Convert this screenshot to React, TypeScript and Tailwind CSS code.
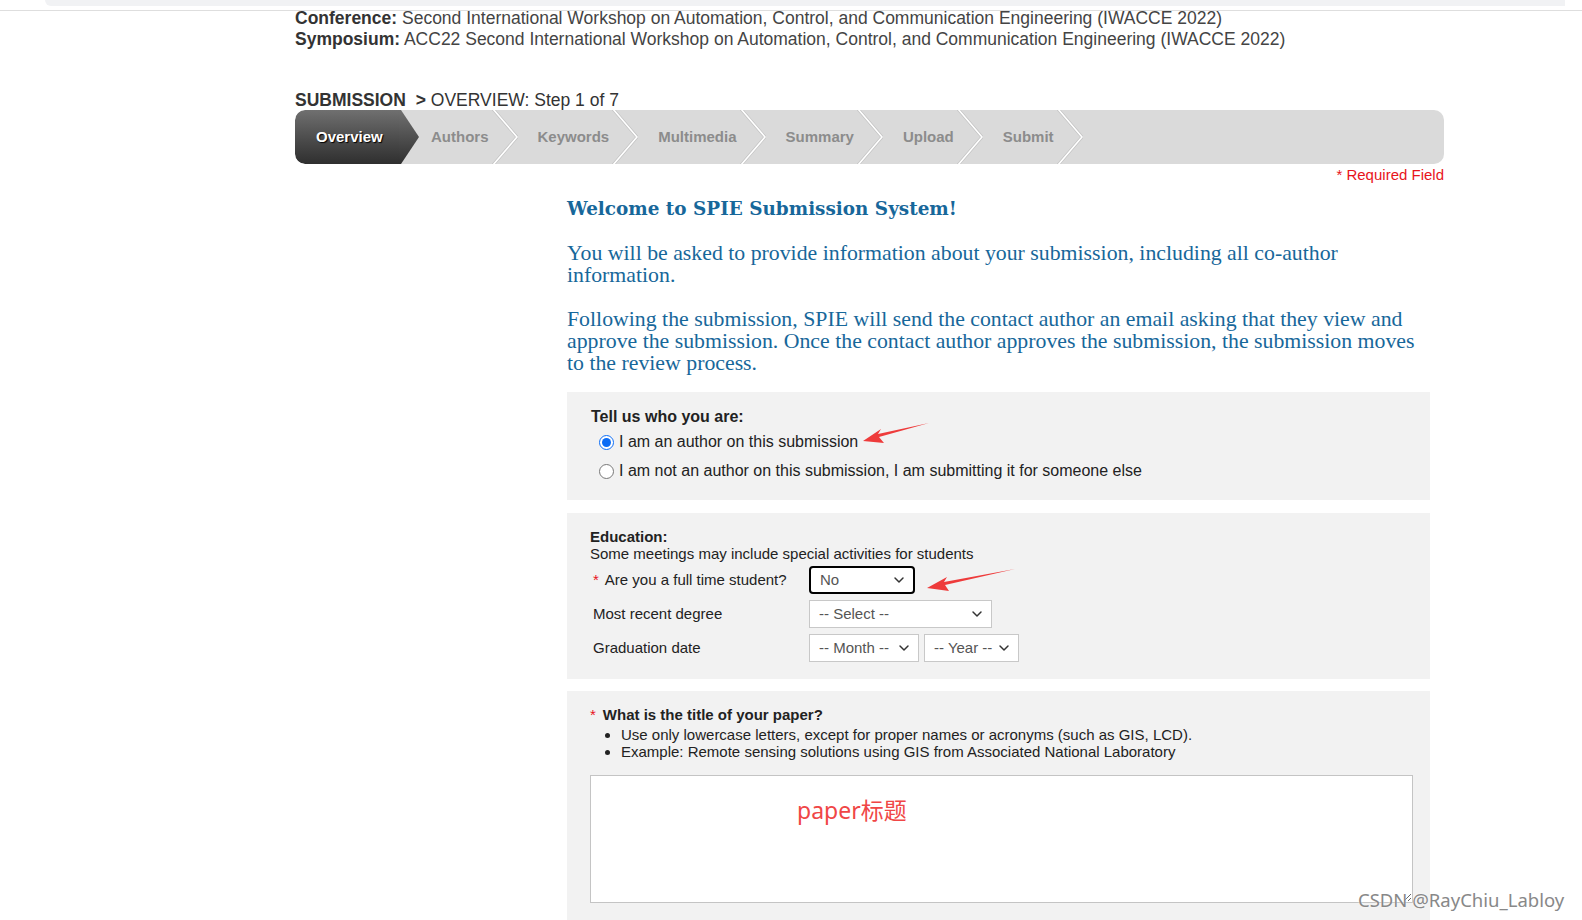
import { ChevronDown } from "lucide-react";

const steps = ["Authors", "Keywords", "Multimedia", "Summary", "Upload", "Submit"];

function Chevron() {
  return (
    <svg width="26" height="54" viewBox="0 0 26 54" className="shrink-0">
      <polyline points="1,-1 25,27 1,55" fill="none" stroke="#c4c4c4" strokeWidth="3" />
      <polyline points="1,-1 25,27 1,55" fill="none" stroke="#ffffff" strokeWidth="1.6" />
    </svg>
  );
}

function FakeSelect({ label, width, focused }: { label: string; width: string; focused?: boolean }) {
  return (
    <div
      className={
        "flex items-center justify-between bg-white text-[15px] text-[#555] pl-[9px] pr-[6px] h-[28px] " +
        width +
        (focused ? " border-2 border-black rounded-[4px]" : " border border-[#c8c8c8]")
      }
    >
      <span>{label}</span>
      <ChevronDown size={16} strokeWidth={2.2} className="text-[#333]" />
    </div>
  );
}

export default function App() {
  return (
    <div className="relative w-[1582px] h-[920px] overflow-hidden bg-white font-['Liberation_Sans',Arial,sans-serif] text-[#333]">
      {/* top leftover header */}
      <div className="h-[11px] border-b border-[#dedede]">
        <div className="ml-[45px] mr-[17px] h-[6px] bg-[#f1f2f4] rounded-bl-[14px]" />
      </div>

      <div className="ml-[295px] w-[1149px]">
        <div className="-mt-[3px] text-[17.5px] leading-[21px] text-[#444]">
          <div>
            <b className="text-[#333]">Conference:</b> Second International Workshop on Automation, Control, and
            Communication Engineering (IWACCE 2022)
          </div>
          <div>
            <b className="text-[#333]">Symposium:</b> ACC22 Second International Workshop on Automation, Control, and
            Communication Engineering (IWACCE 2022)
          </div>
        </div>

        <div className="mt-[40px] text-[17.5px] leading-[20px] text-[#333]">
          <b>SUBMISSION</b> <span className="font-bold ml-[5px]">&gt;</span> OVERVIEW: Step 1 of 7
        </div>

        {/* step bar */}
        <div className="h-[54px] flex bg-[#dadada] rounded-[10px] overflow-hidden text-[15px] font-bold text-[#8c8c8c]">
          <div className="flex items-center w-[104px] pl-[21px] bg-gradient-to-b from-[#707070] to-[#2f2f2f] text-white [text-shadow:1px_1px_1px_#000] rounded-l-[10px]">
            Overview
          </div>
          <svg width="20" height="54" viewBox="0 0 20 54" className="shrink-0">
            <defs>
              <linearGradient id="dk" x1="0" y1="0" x2="0" y2="1">
                <stop offset="0" stopColor="#707070" />
                <stop offset="1" stopColor="#2f2f2f" />
              </linearGradient>
            </defs>
            <polygon points="0,0 2,0 20,27 2,54 0,54" fill="url(#dk)" />
          </svg>
          {steps.map((s, i) => (
            <div key={s} className="flex items-center">
              <span className={(i === 0 ? "pl-[12px]" : "pl-[20px]") + " pr-[3px]"}>{s}</span>
              <Chevron />
            </div>
          ))}
        </div>

        <div className="mt-[2px] text-right text-[15px] leading-[18px] text-[#e8141b]">* Required Field</div>

        {/* main column */}
        <div className="ml-[272px] w-[863px] mt-[13px]">
          <div className="text-[#17679a]">
            <h1 className="font-['DejaVu_Serif',Georgia,serif] text-[18.4px] font-bold leading-[24px]">
              Welcome to SPIE Submission System!
            </h1>
            <div className="font-['Liberation_Serif',Georgia,serif] text-[21.8px] leading-[22px] whitespace-nowrap">
              <p className="mt-[21px]">
                You will be asked to provide information about your submission, including all co-author
                <br />
                information.
              </p>
              <p className="mt-[22px]">
                Following the submission, SPIE will send the contact author an email asking that they view and
                <br />
                approve the submission. Once the contact author approves the submission, the submission moves
                <br />
                to the review process.
              </p>
            </div>
          </div>

          {/* who you are */}
          <div className="relative mt-[18px] bg-[#f2f2f2] h-[108px] pl-[24px] pt-[16px] text-[16px] text-[#222]">
            <div className="font-bold leading-[18px]">Tell us who you are:</div>
            <label className="flex items-center mt-[7px] ml-[8px] leading-[18px]">
              <input type="radio" name="who" defaultChecked className="w-[15px] h-[15px] m-0 mr-[5px] accent-[#0b6cf5]" />
              I am an author on this submission
            </label>
            <label className="flex items-center mt-[11px] ml-[8px] leading-[18px]">
              <input type="radio" name="who" className="w-[15px] h-[15px] m-0 mr-[5px]" />
              I am not an author on this submission, I am submitting it for someone else
            </label>
            <svg width="68" height="20" viewBox="0 0 68 20" className="absolute left-[296px] top-[31px]">
              <polygon points="0,18 18,6 15,11 66,0 16,14 21,20" fill="#ee3b3b" />
            </svg>
          </div>

          {/* education */}
          <div className="relative mt-[13px] bg-[#f2f2f2] h-[166px] pl-[23px] pt-[15px] text-[15px] text-[#222]">
            <div className="font-bold leading-[17px]">Education:</div>
            <div className="leading-[17px]">Some meetings may include special activities for students</div>
            <div className="flex items-center mt-[4px]">
              <div className="w-[219px] pl-[3px]">
                <span className="text-[#e8141b] mr-[6px]">*</span>Are you a full time student?
              </div>
              <FakeSelect label="No" width="w-[106px]" focused />
            </div>
            <div className="flex items-center mt-[6px]">
              <div className="w-[219px] pl-[3px]">Most recent degree</div>
              <FakeSelect label="-- Select --" width="w-[183px]" />
            </div>
            <div className="flex items-center mt-[6px] gap-[5px]">
              <div className="w-[214px] pl-[3px]">Graduation date</div>
              <FakeSelect label="-- Month --" width="w-[110px]" />
              <FakeSelect label="-- Year --" width="w-[95px]" />
            </div>
            <svg width="90" height="22" viewBox="0 0 90 22" className="absolute left-[360px] top-[56px]">
              <polygon points="0,19 20,8 17,13 88,0 18,16 22,22" fill="#ee3b3b" />
            </svg>
          </div>

          {/* paper title */}
          <div className="relative mt-[12px] bg-[#f2f2f2] h-[240px] pl-[23px] pt-[15px] text-[15px] text-[#222]">
            <div className="leading-[17px]">
              <span className="text-[#e8141b] mr-[7px]">*</span>
              <b>What is the title of your paper?</b>
            </div>
            <ul className="list-disc pl-[31px] mt-[3px] leading-[17px]">
              <li>Use only lowercase letters, except for proper names or acronyms (such as GIS, LCD).</li>
              <li>Example: Remote sensing solutions using GIS from Associated National Laboratory</li>
            </ul>
            <div className="relative mt-[15px] mr-[17px]">
              <textarea className="block w-full h-[128px] bg-white border border-[#c4c4c4] resize-y" />
              <span className="absolute left-[207px] top-[20px] text-[23px] leading-[30px] text-[#f04646] font-['Noto_Sans','Noto_Sans_CJK_SC',sans-serif] pointer-events-none">
                paper标题
              </span>
            </div>
          </div>
        </div>
      </div>

      <div className="absolute left-[1358px] top-[889px] text-[18.5px] leading-[22px] text-[#888] font-['Noto_Sans','Noto_Sans_CJK_SC',sans-serif] [text-shadow:0_0_2px_#fff]">
        CSDN @RayChiu_Labloy
      </div>
    </div>
  );
}
